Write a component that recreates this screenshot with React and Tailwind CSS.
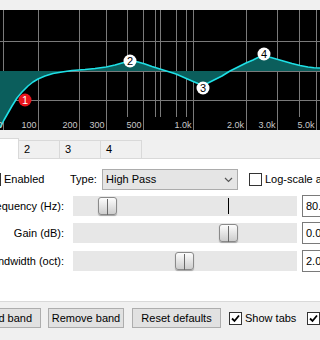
import React from "react";

const majors = [3, 38, 79, 106, 143, 193, 246, 277, 316];
const minors = [127, 155, 160, 176, 186, 299];
const labels = [
  ["50", 2.5],
  ["100", 36.5],
  ["200", 77.5],
  ["300", 104.5],
  ["500", 141.5],
  ["1.0k", 191.5],
  ["2.0k", 244],
  ["3.0k", 275.5],
  ["5.0k", 314.5],
];

// response curve, chart coords (y already minus 10)
const curve = [
  [0, 118], [4, 110], [8, 103], [12, 96], [17, 88], [22, 82], [28, 76], [33, 72],
  [38, 69], [45, 66], [53, 63.5], [62, 62], [72, 60.5], [85, 59.5], [95, 58.5],
  [106, 57], [115, 55], [122, 53], [128, 51.5], [133, 51], [138, 52], [145, 54],
  [152, 56.5], [160, 59], [168, 61.5], [176, 64], [184, 67.5], [192, 71], [198, 73.5],
  [203, 74.5], [208, 73], [215, 69.5], [222, 66], [230, 61], [238, 57], [246, 53],
  [253, 50], [258, 47.5], [262, 46.5], [266, 46.5], [271, 47.5], [278, 49.5],
  [285, 51.5], [292, 53.5], [300, 55.5], [308, 57], [314, 57.8], [320, 58],
];

const points = [
  { n: 1, x: 25, y: 90, red: true },
  { n: 2, x: 130, y: 51 },
  { n: 3, x: 203, y: 78 },
  { n: 4, x: 264, y: 44 },
];

function EqChart() {
  const line = curve.map(([x, y], i) => `${i ? "L" : "M"}${x} ${y}`).join(" ");
  const fill = `${line} L320 61 L0 61 Z`;
  return (
    <svg width="320" height="120" viewBox="0 0 320 120" className="block bg-black">
      {[31, 61, 90].map((y) => (
        <line key={y} x1="0" x2="320" y1={y + 0.5} y2={y + 0.5} stroke="#7a7a7a" strokeWidth="1" />
      ))}
      {majors.map((x) => (
        <line key={x} x1={x + 0.5} x2={x + 0.5} y1="0" y2="120" stroke="#7a7a7a" strokeWidth="1" />
      ))}
      {minors.map((x) => (
        <line key={x} x1={x + 0.5} x2={x + 0.5} y1="0" y2="107" stroke="#7a7a7a" strokeWidth="1" />
      ))}
      <path d={fill} fill="#0b5e5c" fillRule="nonzero" />
      <path d={line} fill="none" stroke="#1ee0e6" strokeWidth="1.6" strokeLinejoin="round" />
      {labels.map(([t, x]) => (
        <text
          key={t}
          x={x}
          y="118"
          textAnchor="end"
          fontSize="9"
          fill="#c8c8c8"
          fontFamily="'Liberation Sans', Arial, sans-serif"
        >
          {t}
        </text>
      ))}
      {points.map((p) => (
        <g key={p.n}>
          <circle cx={p.x} cy={p.y} r="6.5" fill={p.red ? "#e8141b" : "#ffffff"} />
          <text
            x={p.x}
            y={p.y + 4}
            textAnchor="middle"
            fontSize="11"
            fill={p.red ? "#ffffff" : "#000000"}
            fontFamily="'Liberation Sans', Arial, sans-serif"
          >
            {p.n}
          </text>
        </g>
      ))}
    </svg>
  );
}

function CheckBox({ checked }) {
  return (
    <div className="w-[13px] h-[13px] shrink-0 border border-[#333333] bg-white flex items-center justify-center">
      {checked && (
        <svg width="11" height="11" viewBox="0 0 11 11">
          <path d="M2 5.5 L4.5 8 L9 2.5" fill="none" stroke="#000" strokeWidth="1.8" />
        </svg>
      )}
    </div>
  );
}

function Thumb({ left }) {
  return (
    <div
      className="absolute top-px w-[19px] h-[18px] rounded-[3px] border border-[#8a8a8a] bg-gradient-to-b from-[#fdfdfd] to-[#cdcdcd] shadow-[0_1px_1px_rgba(0,0,0,0.3)]"
      style={{ left }}
    >
      <div className="absolute left-[8px] top-[1px] bottom-[-1px] w-px bg-[#6a6a6a]" />
    </div>
  );
}

function SliderRow({ label, value, thumb, tick, className = "" }) {
  return (
    <div className={`flex items-center h-[22px] ${className}`}>
      <div className="w-[89px] shrink-0 flex justify-end whitespace-nowrap">{label}</div>
      <div className="relative ml-[9px] w-[224px] h-[20px] shrink-0 bg-[#e7e7e7]">
        {tick != null && <div className="absolute top-[2px] w-px h-[16px] bg-black" style={{ left: tick }} />}
        <Thumb left={thumb} />
      </div>
      <div className="ml-[5px] w-[60px] h-[22px] shrink-0 border border-[#7a7a7a] bg-white flex items-center pl-[3px]">
        {value}
      </div>
    </div>
  );
}

function Button({ children, w, className = "" }) {
  return (
    <div
      className={`h-[20px] shrink-0 border border-[#adadad] bg-[#e1e1e1] flex items-center justify-center whitespace-nowrap ${className}`}
      style={{ width: w }}
    >
      {children}
    </div>
  );
}

export default function App() {
  return (
    <div className="w-[320px] h-[340px] overflow-hidden bg-[#f0f0f0] text-[11px] text-black font-['Liberation_Sans',Arial,sans-serif]">
      <div className="pt-[10px]">
        <EqChart />
      </div>

      <div className="ml-[-40px] w-[420px] mt-[8px]">
        {/* tabs */}
        <div className="flex items-end h-[20px] pl-[18px]">
          <div className="relative z-10 w-[41px] h-[21px] -mb-px bg-white border border-b-0 border-[#d9d9d9] flex items-center pl-[6px]">
            1
          </div>
          {["2", "3", "4"].map((t) => (
            <div
              key={t}
              className="w-[41px] h-[18px] bg-[#f0f0f0] border-t border-r border-[#d9d9d9] flex items-center pl-[5px]"
            >
              {t}
            </div>
          ))}
        </div>

        {/* panel */}
        <div className="ml-[14px] h-[144px] bg-white border border-[#d9d9d9] pt-[10px]">
          <div className="flex items-center h-[21px]">
            <div className="w-[95px] shrink-0 flex items-center pl-[13px]">
              <CheckBox checked />
              <span className="ml-[3px]">Enabled</span>
            </div>
            <span className="w-[32px] shrink-0">Type:</span>
            <div className="w-[136px] h-[21px] shrink-0 border border-[#acacac] bg-[#e5e5e5] flex items-center justify-between pl-[3px] pr-[4px]">
              <span>High Pass</span>
              <svg width="9" height="6" viewBox="0 0 9 6">
                <path d="M1 1 L4.5 4.5 L8 1" fill="none" stroke="#555" strokeWidth="1.2" />
              </svg>
            </div>
            <div className="ml-[11px] flex items-center">
              <CheckBox />
              <span className="ml-[3px] whitespace-nowrap">Log-scale axis</span>
            </div>
          </div>

          <SliderRow className="mt-[5px]" label="Frequency (Hz):" value="80.0" thumb={25} tick={155} />
          <SliderRow className="mt-[5px]" label="Gain (dB):" value="0.0" thumb={146} />
          <SliderRow className="mt-[6px]" label="Bandwidth (oct):" value="2.0" thumb={102} />
        </div>

        {/* bottom buttons */}
        <div className="flex items-center mt-[6px] pl-[6px]">
          <Button w={75} className="pl-[10px]">Add band</Button>
          <div className="ml-[7px]">
            <Button w={76}>Remove band</Button>
          </div>
          <div className="ml-[8px]">
            <Button w={89}>Reset defaults</Button>
          </div>
          <div className="ml-[8px] flex items-center">
            <CheckBox checked />
            <span className="ml-[3px] whitespace-nowrap">Show tabs</span>
          </div>
          <div className="ml-[11px] flex items-center">
            <CheckBox checked />
            <span className="ml-[3px] whitespace-nowrap">Always on top</span>
          </div>
        </div>
      </div>
    </div>
  );
}
